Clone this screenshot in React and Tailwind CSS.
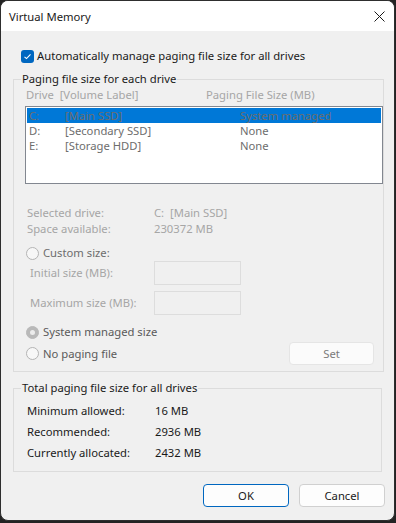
import React from 'react';

const font = { fontFamily: '"Noto Sans", "Open Sans", sans-serif' };

const Radio = ({ checked }) => (
    <span
        className={`w-[13px] h-[13px] rounded-full shrink-0 flex items-center justify-center border ${
            checked ? 'bg-[#b9b9b9] border-[#b9b9b9]' : 'bg-[#f7f7f7] border-[#b4b4b4]'
        }`}
    >
        {checked && <span className="w-[5px] h-[5px] rounded-full bg-[#ececec]" />}
    </span>
);

const drives = [
    { letter: 'C:', label: '[Main SSD]', size: 'System managed', selected: true },
    { letter: 'D:', label: '[Secondary SSD]', size: 'None' },
    { letter: 'E:', label: '[Storage HDD]', size: 'None' },
];

const totals = [
    ['Minimum allowed:', '16 MB'],
    ['Recommended:', '2936 MB'],
    ['Currently allocated:', '2432 MB'],
];

export default function App() {
    return (
        <div className="w-[396px] h-[523px] bg-[#232323] text-[11.25px] leading-[16px]" style={font}>
            <div className="w-[395px] h-[521px] rounded-[8px] border border-[#2e2e2e] bg-[#f0f0f0] overflow-hidden flex flex-col">
                {/* title bar */}
                <div className="h-[30px] bg-white flex items-center pl-[8px] pr-[9px] shrink-0">
                    <span className="text-[#1a1a1a] mt-[1px]">Virtual Memory</span>
                    <svg className="ml-auto" width="11" height="11" viewBox="0 0 11 11">
                        <path d="M0.5 0.5 L10.5 10.5 M10.5 0.5 L0.5 10.5" stroke="#1a1a1a" strokeWidth="1" />
                    </svg>
                </div>

                <div className="pl-[12px] flex flex-col">
                    {/* auto manage checkbox */}
                    <div className="flex items-center mt-[17px] ml-[8px] h-[16px]">
                        <span className="w-[13px] h-[13px] rounded-[3px] bg-[#0067c0] flex items-center justify-center">
                            <svg width="9" height="9" viewBox="0 0 9 9">
                                <path d="M1.5 4.8 L3.5 6.6 L7.5 2.3" stroke="white" strokeWidth="1.1" fill="none" />
                            </svg>
                        </span>
                        <span className="ml-[3px] text-[#1a1a1a]">Automatically manage paging file size for all drives</span>
                    </div>

                    {/* paging file size for each drive */}
                    <fieldset className="mt-[7px] w-[369px] border border-[#dcdcdc] pb-[6px]">
                        <legend className="ml-[7px] px-[1px] text-[#1a1a1a]">Paging file size for each drive</legend>
                        <div className="flex h-[16px] text-[#a6a6a6]">
                            <span className="ml-[12px] w-[180px]">Drive&nbsp; [Volume Label]</span>
                            <span>Paging File Size (MB)</span>
                        </div>
                        <div className="mt-[3px] ml-[11px] w-[358px] h-[78px] border border-[#828790] bg-white p-[1px]">
                            {drives.map((d) => (
                                <div
                                    key={d.letter}
                                    className={`flex h-[15px] leading-[15px] text-[#6d6d6d] ${d.selected ? 'bg-[#0078d7]' : ''}`}
                                >
                                    <span className="pl-[2px] w-[38px]">{d.letter}</span>
                                    <span className="w-[175px]">{d.label}</span>
                                    <span>{d.size}</span>
                                </div>
                            ))}
                        </div>

                        <div className="mt-[21px] ml-[13px] text-[#a6a6a6]">
                            <div className="flex h-[16px]">
                                <span className="w-[127px]">Selected drive:</span>
                                <span>C:&nbsp; [Main SSD]</span>
                            </div>
                            <div className="flex h-[16px]">
                                <span className="w-[127px]">Space available:</span>
                                <span>230372 MB</span>
                            </div>
                        </div>

                        <div className="mt-[8px] ml-[12px] flex items-center h-[16px]">
                            <Radio />
                            <span className="ml-[4px] text-[#6d6d6d]">Custom size:</span>
                        </div>
                        <div className="ml-[16px] flex items-center h-[24px]">
                            <span className="w-[124px] text-[#a6a6a6]">Initial size (MB):</span>
                            <span className="w-[87px] h-[24px] border border-[#dddddd]" />
                        </div>
                        <div className="mt-[6px] ml-[16px] flex items-center h-[24px]">
                            <span className="w-[124px] text-[#a6a6a6]">Maximum size (MB):</span>
                            <span className="w-[87px] h-[24px] border border-[#dddddd]" />
                        </div>

                        <div className="mt-[9px] ml-[12px] flex items-center h-[16px]">
                            <Radio checked />
                            <span className="ml-[4px] text-[#5a5a5a]">System managed size</span>
                        </div>
                        <div className="mt-[2px] ml-[12px] mr-[9px] flex items-center">
                            <Radio />
                            <span className="ml-[4px] text-[#5a5a5a]">No paging file</span>
                            <button className="ml-auto w-[85px] h-[23px] rounded-[4px] bg-[#fbfbfb] border border-[#e5e5e5] text-[#7a7a7a]">
                                Set
                            </button>
                        </div>
                    </fieldset>

                    {/* totals */}
                    <fieldset className="mt-[8px] w-[369px] border border-[#dcdcdc] pb-[10px]">
                        <legend className="ml-[7px] px-[1px] text-[#1a1a1a]">Total paging file size for all drives</legend>
                        <div className="mt-[7px] ml-[13px] flex flex-col gap-[5px] text-[#1a1a1a]">
                            {totals.map(([k, v]) => (
                                <div key={k} className="flex h-[16px]">
                                    <span className="w-[128px]">{k}</span>
                                    <span>{v}</span>
                                </div>
                            ))}
                        </div>
                    </fieldset>

                    <div className="mt-[12px] mr-[9px] flex justify-end gap-[10px]">
                        <button className="w-[86px] h-[23px] rounded-[4px] bg-[#fdfdfd] border border-[#0067c0] text-[#1a1a1a]">
                            OK
                        </button>
                        <button className="w-[86px] h-[23px] rounded-[4px] bg-[#fdfdfd] border border-[#d0d0d0] text-[#1a1a1a]">
                            Cancel
                        </button>
                    </div>
                </div>
            </div>
        </div>
    );
}
